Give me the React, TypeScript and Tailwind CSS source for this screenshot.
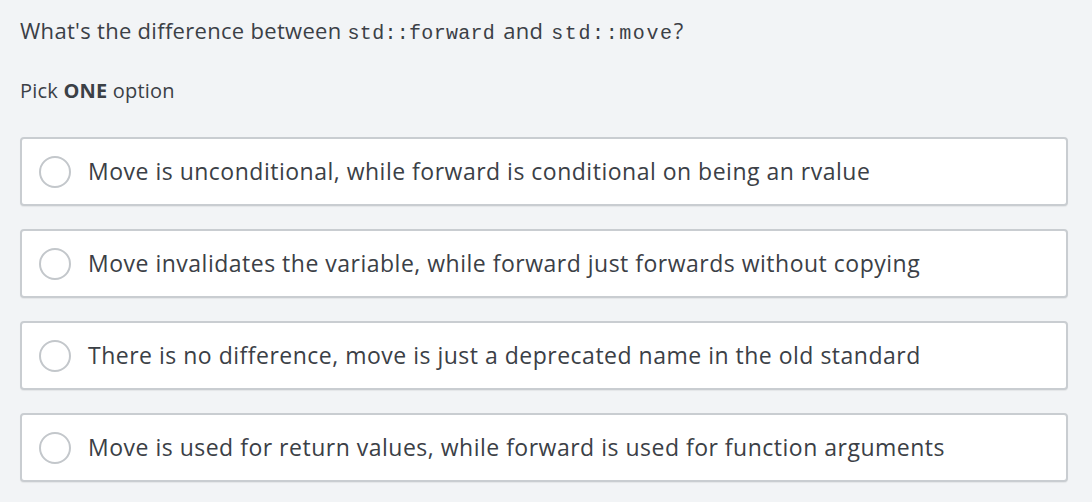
const options = [
  "Move is unconditional, while forward is conditional on being an rvalue",
  "Move invalidates the variable, while forward just forwards without copying",
  "There is no difference, move is just a deprecated name in the old standard",
  "Move is used for return values, while forward is used for function arguments",
];

const mono = "font-['Liberation_Mono',monospace] text-[20px] leading-none";

export default function App() {
  return (
    <div
      className="min-h-screen w-full bg-[#f2f4f6] pl-5 pr-6 pt-4 text-[#3b4046]"
      style={{ fontFamily: '"Open Sans", sans-serif' }}
    >
      <p className="h-7 text-[22px] leading-7 tracking-[0.3px]">
        What's the difference between <code className={mono}>std::forward</code>
        <span className="mx-[8px]">and</span>
        <code className={`${mono} tracking-[1.6px]`}>std::move</code>?
      </p>
      <p className="mt-[34px] text-[20px] leading-[26px] tracking-[0.2px]">
        Pick <span className="font-bold">ONE</span> option
      </p>
      <div className="mt-[33px] flex flex-col gap-[23px]">
        {options.map((o) => (
          <label
            key={o}
            className="flex h-[69px] items-center rounded-[4px] border-2 border-[#c9cdd1] bg-white pl-[17px] shadow-[0_1px_1px_rgba(0,0,0,0.06)]"
          >
            <span className="h-[32px] w-[32px] shrink-0 rounded-full border-2 border-[#c3c7cb] bg-white" />
            <span className="ml-[17px] text-[23px] tracking-[0.5px] text-[#3b4046]">{o}</span>
          </label>
        ))}
      </div>
    </div>
  );
}
